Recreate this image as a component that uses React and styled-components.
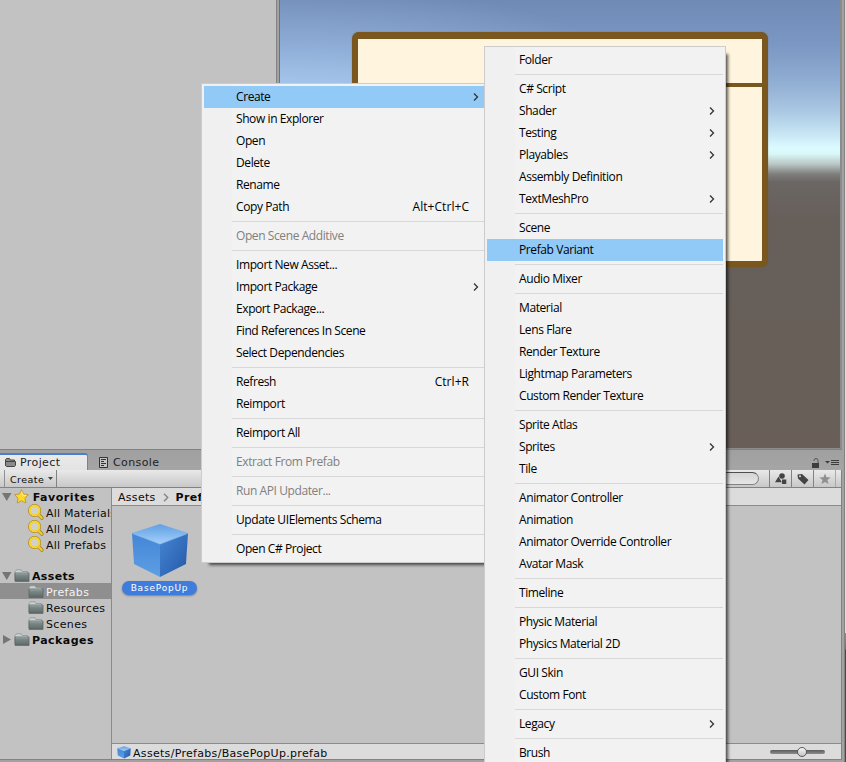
import React from 'react'
import styled, { createGlobalStyle, css } from 'styled-components'

const GlobalStyle = createGlobalStyle`
  * {
    box-sizing: border-box;
  }

  body {
    margin: 0;
    overflow: hidden;
    font-family: 'DejaVu Sans', sans-serif;
    font-size: 11px;
    color: #0a0a0a;
  }

  svg {
    display: block;
    flex-shrink: 0;
  }
`

const Screen = styled.div`
  position: relative;
  display: flex;
  width: 846px;
  height: 762px;
  overflow: hidden;
  background: #a2a2a2;
`

const Editor = styled.div`
  display: flex;
  flex-direction: column;
  width: 842px;
  height: 762px;
`

const Edge = styled.div`
  margin-left: 2px;
  width: 2px;
  border-left: 1px solid #828282;
  background: linear-gradient(#dedede 633px, #8c8c8c 633px, #707070 649px, #484848 650px);
`

const TopPanels = styled.div`
  display: flex;
  height: 450px;
  border-bottom: 1px solid #828282;
`

const Hierarchy = styled.div`
  width: 276px;
  height: 449px;
  background: #c2c2c2;
`

const Splitter = styled.div`
  width: 4px;
  border-left: 1px solid #828282;
  border-right: 1px solid #727272;
  background: #a2a2a2;
`

const Scene = styled.div`
  width: 562px;
  height: 449px;
  padding: 32px 0 0 72px;
  border-right: 2px solid #8b8b8b;
  border-bottom: 1px solid #8b8b8b;
  background:
    radial-gradient(ellipse 380px 130px at 0 110px, rgba(180, 216, 255, 0.65), transparent),
    linear-gradient(
      #6f8ab5 0,
      #7b97c3 45px,
      #8facd2 80px,
      #a9c6e2 110px,
      #c2e0f0 130px,
      #dcfbff 148px,
      #d9f7f7 154px,
      #b9c7c5 164px,
      #7f7f7d 174px,
      #6b6664 182px,
      #675f5a 220px,
      #695f58 448px
    );
`

const Popup = styled.div`
  width: 416px;
  height: 235px;
  border: 6px solid #79571f;
  border-top-width: 7px;
  border-radius: 7px;
  background: #fff5de;
  box-shadow: 0 0 1px #79571f;
`

const PopupHeader = styled.div`
  height: 48px;
  border-bottom: 4px solid #79571f;
`

const TabBar = styled.div`
  display: flex;
  align-items: flex-end;
  height: 20px;
  padding-right: 3px;
  background: linear-gradient(#a0a0a0, #a5a5a5);
`

const Tab = styled.div`
  display: flex;
  align-items: center;
  gap: 4px;
  height: 17px;
  letter-spacing: 0.4px;
  color: #222;
  ${({ $active }) =>
    $active
      ? css`
          width: 88px;
          padding-left: 5px;
          border-top: 2px solid #4c7fcb;
          border-right: 1px solid #828282;
          border-radius: 0 3px 0 0;
          background: linear-gradient(#eaeaea, #e3e3e3);
        `
      : css`
          padding: 1px 0 0 11px;
        `}
`

const TabTools = styled.div`
  display: flex;
  align-items: center;
  gap: 5px;
  height: 15px;
  margin-left: auto;
`

const Toolbar = styled.div`
  display: flex;
  align-items: stretch;
  height: 18px;
  padding-left: 4px;
  border-bottom: 1px solid #828282;
  background: linear-gradient(#e9e9e9, #c8c8c8);
`

const CreateButton = styled.div`
  display: flex;
  align-items: center;
  gap: 4px;
  width: 53px;
  padding: 1px 0 0 5px;
  border-left: 1px solid #909090;
  border-right: 1px solid #828282;
  font-size: 9.5px;
  letter-spacing: 0.45px;

  svg {
    margin-top: -1px;
  }
`

const Search = styled.div`
  width: 300px;
  height: 13px;
  margin: 2px 10px 0 auto;
  border: 1px solid #828282;
  border-top-color: #4f4f4f;
  border-radius: 7px;
  background: linear-gradient(#d4d4d4, #e6e6e6);
`

const ToolButton = styled.div`
  display: flex;
  align-items: center;
  justify-content: center;
  width: 22px;
  border-left: 1px solid #828282;
`

const ToolbarEnd = styled.div`
  width: 7px;
  border-left: 1px solid #a9a9a9;
  border-right: 1px solid #828282;
`

const Browser = styled.div`
  display: flex;
  height: 272px;
  border-bottom: 1px solid #828282;
`

const Tree = styled.div`
  width: 112px;
  overflow: hidden;
  border-right: 1px solid #8a8a8a;
  background: #c2c2c2;
`

const TreeGroup = styled.div`
  margin-bottom: ${({ $gap }) => $gap || 0}px;
`

const TreeRow = styled.div`
  display: flex;
  align-items: center;
  gap: 2px;
  height: 16px;
  padding-left: ${({ $nested }) => ($nested ? 28 : 2)}px;
  white-space: nowrap;
  font-weight: ${({ $nested }) => ($nested ? 400 : 700)};
  letter-spacing: ${({ $spacing }) => $spacing || '0.35px'};
  color: ${({ $selected }) => ($selected ? '#f4f4f4' : '#0a0a0a')};
  background: ${({ $selected }) => ($selected ? '#8f8f8f' : 'transparent')};
`

const RowText = styled.span`
  padding-top: 2px;
`

const Content = styled.div`
  display: flex;
  flex: 1;
  flex-direction: column;
  border-right: 1px solid #828282;
  background: #c2c2c2;
`

const Breadcrumb = styled.div`
  display: flex;
  align-items: center;
  gap: 7px;
  height: 18px;
  padding: 1px 0 0 6px;
  border-bottom: 1px solid #8a8a8a;
  background: #dcdcdc;
  letter-spacing: 0.3px;
`

const Grid = styled.div`
  flex: 1;
  padding: 17px 0 0 10px;
`

const Asset = styled.div`
  display: flex;
  flex-direction: column;
  align-items: center;
  gap: 2px;
  width: 75px;
`

const AssetLabel = styled.div`
  width: 75px;
  height: 14px;
  border-radius: 7px;
  background: #3f7ddd;
  box-shadow: 0 1px 2px rgba(0, 0, 0, 0.35);
  color: #fff;
  font-size: 9px;
  line-height: 15px;
  letter-spacing: 0.8px;
  text-align: center;
`

const StatusBar = styled.div`
  display: flex;
  align-items: center;
  gap: 2px;
  height: 16px;
  padding: 1px 16px 0 5px;
  border-top: 1px solid #8a8a8a;
  background: #dcdcdc;
`

const StatusPath = styled.span`
  padding-top: 2px;
  letter-spacing: 0.31px;
`

const Slider = styled.div`
  display: flex;
  align-items: center;
  justify-content: center;
  width: 55px;
  height: 4px;
  margin: 0 0 0 auto;
  padding-left: 9px;
  border-radius: 2px;
  background: linear-gradient(#5c5c5c, #8c8c8c);
`

const Knob = styled.div`
  width: 10px;
  height: 10px;
  border: 1px solid #5b5b5b;
  border-radius: 50%;
  background: linear-gradient(#f6f6f6, #c4c4c4);
`

const Menu = styled.div`
  position: absolute;
  top: ${({ $top }) => $top}px;
  left: ${({ $left }) => $left}px;
  width: ${({ $width }) => $width}px;
  padding: 2px;
  border: 1px solid #ccc;
  background: linear-gradient(90deg, #f0f0f0 30px, #f2f2f2 30px);
  box-shadow: 5px 5px 3px -3px rgba(0, 0, 0, 0.65);
  font-family: 'Open Sans', 'Noto Sans', sans-serif;
  font-size: 12px;
  letter-spacing: -0.41px;
  color: #000;
`

const MenuItem = styled.div`
  display: flex;
  align-items: center;
  justify-content: space-between;
  height: 22px;
  padding: 0 8px 0 32px;
  white-space: nowrap;
  line-height: 16px;
  color: ${({ $disabled }) => ($disabled ? '#808080' : '#000')};
  background: ${({ $active }) => ($active ? '#91c9f7' : 'transparent')};
`

const MenuLabel = styled.span`
  padding-bottom: 1px;
`

const Shortcut = styled(MenuLabel)`
  margin-right: 10px;
  letter-spacing: 0.05px;
`

const Separator = styled.div`
  height: 7px;
  margin-left: 28px;
  border-top: 3px solid transparent;
  background: linear-gradient(#d7d7d7 1px, transparent 1px) no-repeat;
`

const assetMenu = [
  { label: 'Create', sub: true, active: true },
  { label: 'Show in Explorer' },
  { label: 'Open' },
  { label: 'Delete' },
  { label: 'Rename' },
  { label: 'Copy Path', shortcut: 'Alt+Ctrl+C' },
  null,
  { label: 'Open Scene Additive', disabled: true },
  null,
  { label: 'Import New Asset...' },
  { label: 'Import Package', sub: true },
  { label: 'Export Package...' },
  { label: 'Find References In Scene' },
  { label: 'Select Dependencies' },
  null,
  { label: 'Refresh', shortcut: 'Ctrl+R' },
  { label: 'Reimport' },
  null,
  { label: 'Reimport All' },
  null,
  { label: 'Extract From Prefab', disabled: true },
  null,
  { label: 'Run API Updater...', disabled: true },
  null,
  { label: 'Update UIElements Schema' },
  null,
  { label: 'Open C# Project' },
]

const createMenu = [
  { label: 'Folder' },
  null,
  { label: 'C# Script' },
  { label: 'Shader', sub: true },
  { label: 'Testing', sub: true },
  { label: 'Playables', sub: true },
  { label: 'Assembly Definition' },
  { label: 'TextMeshPro', sub: true },
  null,
  { label: 'Scene' },
  { label: 'Prefab Variant', active: true },
  null,
  { label: 'Audio Mixer' },
  null,
  { label: 'Material' },
  { label: 'Lens Flare' },
  { label: 'Render Texture' },
  { label: 'Lightmap Parameters' },
  { label: 'Custom Render Texture' },
  null,
  { label: 'Sprite Atlas' },
  { label: 'Sprites', sub: true },
  { label: 'Tile' },
  null,
  { label: 'Animator Controller' },
  { label: 'Animation' },
  { label: 'Animator Override Controller' },
  { label: 'Avatar Mask' },
  null,
  { label: 'Timeline' },
  null,
  { label: 'Physic Material' },
  { label: 'Physics Material 2D' },
  null,
  { label: 'GUI Skin' },
  { label: 'Custom Font' },
  null,
  { label: 'Legacy', sub: true },
  null,
  { label: 'Brush' },
]

const Chevron = () => (
  <svg width="6" height="10" viewBox="0 0 6 10" fill="none" stroke="#333" strokeWidth="1.3">
    <path d="M1 1.500 4.500 5 1 8.500" />
  </svg>
)

const ContextMenu = ({ items, top, left, width }) => (
  <Menu $top={top} $left={left} $width={width}>
    {items.map((item, i) =>
      item ? (
        <MenuItem key={i} $active={item.active} $disabled={item.disabled}>
          <MenuLabel>{item.label}</MenuLabel>
          {item.shortcut && <Shortcut>{item.shortcut}</Shortcut>}
          {item.sub && <Chevron />}
        </MenuItem>
      ) : (
        <Separator key={i} />
      )
    )}
  </Menu>
)

const Arrow = ({ open }) => (
  <svg width="10" height="10" viewBox="0 0 10 10" fill="#757575">
    <path d={open ? 'M0 2h9.500L4.750 10z' : 'M1 1v9L9 5.500z'} />
  </svg>
)

const Folder = () => (
  <svg width="16" height="13" viewBox="0 0 16 13">
    <defs>
      <linearGradient id="folder" x2="0" y2="1">
        <stop offset="0" stopColor="#869493" />
        <stop offset="1" stopColor="#5c6866" />
      </linearGradient>
    </defs>
    <path d="M1 11V2.700L2.500.8h4.500l1 1.700h5.500V5" fill="#cdd3d3" stroke="#8b9494" strokeWidth=".8" />
    <path d="M1 4h14V12.400H1z" fill="url(#folder)" stroke="#5b6665" strokeWidth=".8" />
    <path d="M1.500 4.800h13" stroke="#a3afae" strokeWidth=".7" />
  </svg>
)

const Star = () => (
  <svg width="15" height="15" viewBox="0 0 15 15">
    <path
      d="m7.500.8 2 4.200 4.900.7-3.500 3.400.9 4.900-4.300-2.300L3.200 14l.9-4.900L.6 5.700 5.500 5z"
      fill="#ffd92c"
      stroke="#b39132"
      strokeWidth=".8"
      strokeLinejoin="round"
    />
    <path d="m7.500 2.500 1.300 3.600 3.400.5" stroke="#fff08a" fill="none" />
  </svg>
)

const Magnifier = () => (
  <svg width="16" height="16" viewBox="0 0 16 16" fill="none">
    <path d="m10.200 10.200 3.600 3.800" stroke="#9a7b1e" strokeWidth="3.400" strokeLinecap="round" />
    <circle cx="6.600" cy="6.500" r="4.900" stroke="#9a7b1e" strokeWidth="3.200" />
    <circle cx="6.600" cy="6.500" r="4.900" fill="#d0d0cc" stroke="#f8d330" strokeWidth="2.100" />
    <path d="m10.400 10.400 3.300 3.500" stroke="#f5cd25" strokeWidth="2.200" strokeLinecap="round" />
  </svg>
)

const Cube = ({ width, height }) => (
  <svg width={width} height={height} viewBox="0 0 58 56" preserveAspectRatio="none">
    <defs>
      <linearGradient id="cubeTop" x2="0" y2="1">
        <stop offset="0" stopColor="#5f9fe3" />
        <stop offset="1" stopColor="#a4d0fa" />
      </linearGradient>
      <linearGradient id="cubeLeft" x2="0" y2="1">
        <stop offset="0" stopColor="#4385d5" />
        <stop offset="1" stopColor="#5d9fe4" />
      </linearGradient>
      <linearGradient id="cubeRight" x2="1" y2="1">
        <stop offset="0" stopColor="#4586d6" />
        <stop offset="1" stopColor="#2458a5" />
      </linearGradient>
    </defs>
    <path d="M29 1 57 10 29 21 1 10z" fill="url(#cubeTop)" />
    <path d="M1 10 29 21V54L3 41z" fill="url(#cubeLeft)" />
    <path d="M57 10 29 21V54L55 41z" fill="url(#cubeRight)" />
    <path d="M1.500 10.500 29 21l27.500-10.500" fill="none" stroke="#8cc0f5" strokeWidth=".8" />
  </svg>
)

const ProjectIcon = () => (
  <svg width="11" height="9" viewBox="0 0 11 9" fill="#8a8a8a" stroke="#444">
    <path d="M.5 7.500v-6l1-1h3l1 1.500h4v1.500M.5 3.500h10v4l-1 1h-8l-1-1z" />
  </svg>
)

const ConsoleIcon = () => (
  <svg width="10" height="11" viewBox="0 0 10 11" fill="none" stroke="#333">
    <path d="M.5.5h8v10h-8z" fill="#c5c5c5" />
    <path d="M2 2.500h5M2 4.500h3M2 6.500h5M2 8.500h3" />
  </svg>
)

const LockIcon = () => (
  <svg width="8" height="10" viewBox="0 0 8 10">
    <path d="M2 3V2.500a2 2 0 0 1 4 0V5" fill="none" stroke="#555" />
    <path d="M0 5h7v5H0z" fill="#3c3c3c" />
  </svg>
)

const PaneMenuIcon = () => (
  <svg width="14" height="7" viewBox="0 0 14 7" fill="#3c3c3c">
    <path d="M0 2h5L2.500 4.500zM6 1h8v1H6zM6 3h8v1H6zM6 5h8v1H6z" />
  </svg>
)

const ShapesIcon = () => (
  <svg width="12" height="11" viewBox="0 0 12 11" fill="#444">
    <circle cx="7" cy="3" r="2.800" />
    <path d="m3.500 3.500 3.300 5.700H0zM7 6.500h4.300V11H7z" />
  </svg>
)

const TagIcon = () => (
  <svg width="12" height="12" viewBox="0 0 12 12" fill="#444" fillRule="evenodd">
    <path d="M.5 1.500 5 1l6.500 6-4 4.500L1 5.500zM3 2.200a1 1 0 1 0 0 2 1 1 0 0 0 0-2z" />
  </svg>
)

const FavoriteIcon = () => (
  <svg width="12" height="12" viewBox="0 0 12 12" fill="#8f8f8f">
    <path d="m6 .5 1.500 3.800 4.200.2-3.300 2.600 1.200 4L6 8.900l-3.600 2.200 1.200-4L.3 4.500l4.200-.2z" />
  </svg>
)

export default function App() {
  return (
    <>
      <GlobalStyle />
      <Screen>
        <Editor>
          <TopPanels>
            <Hierarchy />
            <Splitter />
            <Scene>
              <Popup>
                <PopupHeader />
              </Popup>
            </Scene>
          </TopPanels>
          <TabBar>
            <Tab $active>
              <ProjectIcon />
              Project
            </Tab>
            <Tab>
              <ConsoleIcon />
              Console
            </Tab>
            <TabTools>
              <LockIcon />
              <PaneMenuIcon />
            </TabTools>
          </TabBar>
          <Toolbar>
            <CreateButton>
              Create
              <svg width="5" height="4" viewBox="0 0 5 4" fill="#444">
                <path d="M0 0h5L2.500 3z" />
              </svg>
            </CreateButton>
            <Search />
            <ToolButton>
              <ShapesIcon />
            </ToolButton>
            <ToolButton>
              <TagIcon />
            </ToolButton>
            <ToolButton>
              <FavoriteIcon />
            </ToolButton>
            <ToolbarEnd />
          </Toolbar>
          <Browser>
            <Tree>
              <TreeGroup $gap={15}>
                <TreeRow $spacing="0.55px">
                  <Arrow open />
                  <Star />
                  <RowText>&#8202;Favorites</RowText>
                </TreeRow>
                {['All Materials', 'All Models', 'All Prefabs'].map((name) => (
                  <TreeRow key={name} $nested $spacing="0.2px">
                    <Magnifier />
                    <RowText>{name}</RowText>
                  </TreeRow>
                ))}
              </TreeGroup>
              <TreeGroup>
                <TreeRow>
                  <Arrow open />
                  <Folder />
                  <RowText>Assets</RowText>
                </TreeRow>
                {['Prefabs', 'Resources', 'Scenes'].map((name) => (
                  <TreeRow key={name} $nested $selected={name === 'Prefabs'}>
                    <Folder />
                    <RowText>{name}</RowText>
                  </TreeRow>
                ))}
                <TreeRow $spacing="0.45px">
                  <Arrow />
                  <Folder />
                  <RowText>Packages</RowText>
                </TreeRow>
              </TreeGroup>
            </Tree>
            <Content>
              <Breadcrumb>
                <span>Assets</span>
                <svg width="6" height="9" viewBox="0 0 6 9" fill="none" stroke="#888" strokeWidth="1.500">
                  <path d="m1 .8 3.700 3.700L1 8.200" />
                </svg>
                <b>Prefabs</b>
              </Breadcrumb>
              <Grid>
                <Asset>
                  <Cube width={58} height={56} />
                  <AssetLabel>BasePopUp</AssetLabel>
                </Asset>
              </Grid>
              <StatusBar>
                <Cube width={14} height={13} />
                <StatusPath>Assets/Prefabs/BasePopUp.prefab</StatusPath>
                <Slider>
                  <Knob />
                </Slider>
              </StatusBar>
            </Content>
          </Browser>
        </Editor>
        <Edge />
        <ContextMenu items={assetMenu} top={83} left={201} width={289} />
        <ContextMenu items={createMenu} top={46} left={484} width={242} />
      </Screen>
    </>
  )
}
